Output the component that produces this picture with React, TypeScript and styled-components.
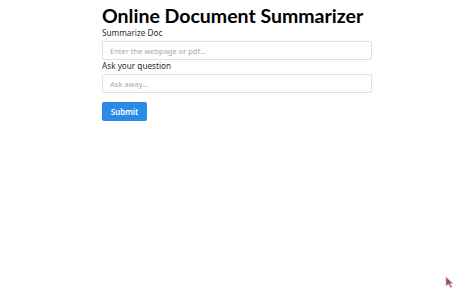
import React from 'react';
import styled, { createGlobalStyle } from 'styled-components';

const GlobalStyle = createGlobalStyle`
  html, body {
    margin: 0;
    background: #fff;
    font-family: 'Noto Sans', 'Open Sans', sans-serif;
    color: #212529;
  }
`;

const Page = styled.div`
  display: flex;
  justify-content: center;
  min-height: 292px;
`;

const Form = styled.form`
  width: 270px;
  display: flex;
  flex-direction: column;
  padding-top: 4px;
`;

const Title = styled.h1`
  margin: 0;
  font-family: Lato, 'Noto Sans', sans-serif;
  font-size: 19.5px;
  line-height: 23px;
  font-weight: 700;
  color: #000;
  white-space: nowrap;
`;

const Label = styled.label`
  font-size: 8.2px;
  line-height: 11px;
  color: #2a2e33;
  margin-bottom: 3px;
`;

const Input = styled.input`
  box-sizing: border-box;
  height: 19px;
  width: 100%;
  border: 1px solid #dcdfe3;
  border-radius: 2px;
  padding: 0 7px;
  font-family: inherit;
  font-size: 7.5px;
  margin: 0;
  &::placeholder {
    color: #a4a9ae;
  }
`;

const SubmitButton = styled.button`
  align-self: flex-start;
  margin-top: 9px;
  height: 19px;
  width: 45px;
  padding: 0;
  border: none;
  border-radius: 2px;
  background: #2b8ae6;
  color: #fff;
  font-family: inherit;
  font-size: 8px;
  font-weight: 600;
`;

const Cursor = styled.svg`
  position: absolute;
  left: 445px;
  top: 276px;
`;

export default function App() {
  return (
    <>
      <GlobalStyle />
      <Page>
        <Form onSubmit={(e) => e.preventDefault()}>
          <Title>Online Document Summarizer</Title>
          <Label>Summarize Doc</Label>
          <Input placeholder="Enter the webpage or pdf..." />
          <Label>Ask your question</Label>
          <Input placeholder="Ask away..." />
          <SubmitButton type="submit">Submit</SubmitButton>
        </Form>
      </Page>
      <Cursor width="9" height="12" viewBox="0 0 9 12">
        <path d="M1 1 L1 10 L3.5 8 L5.5 11.5 L7 10.8 L5 7.5 L8 7.5 Z" fill="#9a4a6a" stroke="#d9b3c4" strokeWidth="0.8" />
      </Cursor>
    </>
  );
}
